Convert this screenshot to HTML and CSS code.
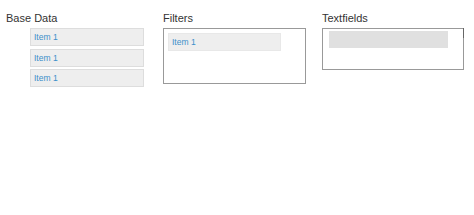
FILE: index.html
```html
<!DOCTYPE html>
<html lang="en">
<head>
    <meta charset="UTF-8">
    <title>Data Panels</title>
    <link rel="stylesheet" href="styles.css">
</head>
<body>
<div class="panels">
    <div class="panel">
        <h3>Base Data</h3>
        <div class="item-list">
            <div class="item">Item 1</div>
            <div class="item">Item 1</div>
            <div class="item">Item 1</div>
        </div>
    </div>
    <div class="panel">
        <h3>Filters</h3>
        <div class="drop-box">
            <div class="item flat">Item 1</div>
        </div>
    </div>
    <div class="panel">
        <h3>Textfields</h3>
        <div class="text-box">
            <div class="text-input"></div>
        </div>
    </div>
</div>
</body>
</html>
```

FILE: styles.css
```css
body {
    margin: 0;
    background-color: #fff;
    font-family: "Liberation Sans", Arial, sans-serif;
}

.panels {
    display: grid;
    grid-template-columns: 157px 159px 152px;
    padding: 12px 0 0 6px;
}

.panel h3 {
    margin: 0 0 3px 0;
    font-size: 11px;
    font-weight: normal;
    line-height: 13px;
    color: #333;
}

.item-list {
    display: flex;
    flex-direction: column;
    gap: 2.5px;
    padding-left: 24px;
}

.item {
    box-sizing: border-box;
    width: 114px;
    height: 18px;
    padding: 0 3px;
    background-color: #eee;
    border: 1px solid #ddd;
    color: #3d8fca;
    font-size: 8.5px;
    line-height: 16px;
}

.item.flat {
    width: 113px;
    border-color: #e8e8e8;
}

/* filter drop area */
.drop-box {
    box-sizing: border-box;
    width: 143px;
    height: 56px;
    padding: 4px;
    border: 1px solid #999;
}

.text-box {
    position: relative;
    box-sizing: border-box;
    width: 142px;
    height: 42px;
    margin-top: 1px;
    padding: 2px 0 0 6px;
    border: 1px solid #999;
}

/* small scroll thumb on the right edge */
.text-box::after {
    content: "";
    position: absolute;
    top: -1px;
    right: -1px;
    width: 1px;
    height: 10px;
    background-color: #666;
}

.text-input {
    width: 119px;
    height: 17px;
    background-color: #e0e0e0;
}
```
